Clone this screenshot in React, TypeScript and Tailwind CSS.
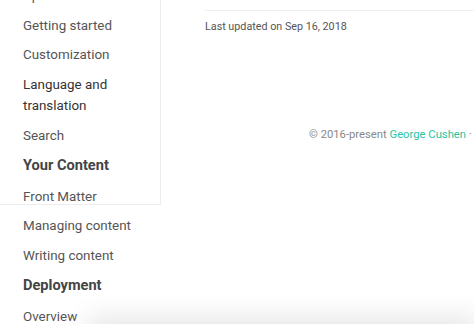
import React from "react";

const Item = ({ children }: { children: React.ReactNode }) => (
  <div className="py-[4px] text-[13.4px] leading-[21.5px] text-[#555]">{children}</div>
);

const Header = ({ children }: { children: React.ReactNode }) => (
  <div className="py-[5px] text-[14.6px] leading-[21.5px] font-bold text-[#444]">{children}</div>
);

export default function App() {
  return (
    <div
      className="relative h-[324px] w-[474px] overflow-hidden bg-white"
      style={{ fontFamily: "Roboto, 'Liberation Sans', sans-serif" }}
    >
      <div className="flex">
        <div className="h-[205px] w-[161px] shrink-0 border-r border-b border-[#ececec]">
          <div className="mt-[-19px] flex flex-col pl-[23px]">
            <Item>Update</Item>
            <Item>Getting started</Item>
            <Item>Customization</Item>
            <Item>
              <span className="text-[#333]">Language and</span>
              <br />
              <span className="text-[#333]">translation</span>
            </Item>
            <Item>Search</Item>
            <Header>Your Content</Header>
            <Item>Front Matter</Item>
            <Item>Managing content</Item>
            <Item>Writing content</Item>
            <Header>Deployment</Header>
            <Item>Overview</Item>
          </div>
        </div>
        <div className="flex-1 pl-[44px]">
          <div className="mt-[10px] border-t border-[#f0f0f0]" />
          <div className="mt-[9px] text-[10.75px] leading-[14px] text-[#555]">
            Last updated on Sep 16, 2018
          </div>
          <div className="mt-[93px] whitespace-nowrap pl-[104px] text-[11.25px] leading-[16px] text-[#888]">
            © 2016-present <span className="text-[#2bc4a0]">George Cushen</span> ·
          </div>
        </div>
      </div>
      <div className="absolute left-[95px] right-[4px] top-[326px] h-[20px] bg-white shadow-[0_0_28px_8px_rgba(0,0,0,0.11)]" />
    </div>
  );
}
